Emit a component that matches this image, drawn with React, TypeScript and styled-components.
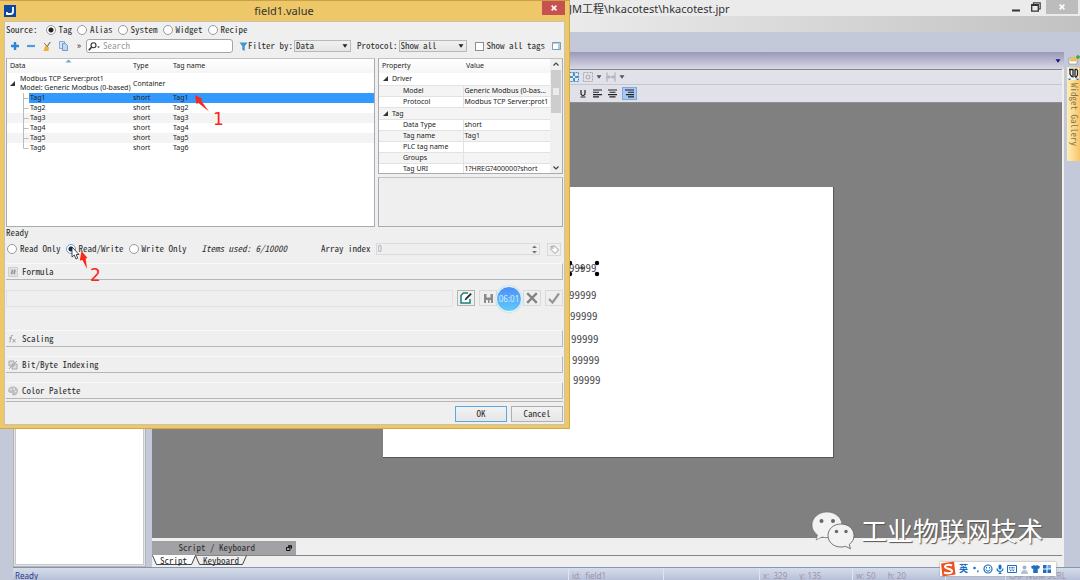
import React from 'react';
import styled, { createGlobalStyle, css } from 'styled-components';

const mono = `"Noto Sans Mono CJK SC", "Liberation Mono", monospace`;
const ui = `"Noto Sans", "DejaVu Sans Condensed", sans-serif`;
const title = `"Noto Sans", "Noto Sans CJK SC", sans-serif`;

const GlobalStyle = createGlobalStyle`
  * { box-sizing: border-box; }
  body { margin: 0; background: #c3c9d9; }
  button, input, select { font: inherit; color: inherit; margin: 0; padding: 0; border: 0; background: none; border-radius: 0; outline: 0; }
  svg { display: block; flex: none; }
`;

/* ---------- main window ---------- */

const Desktop = styled.div`
  position: relative;
  display: flex;
  flex-direction: column;
  min-height: 100vh;
  overflow: hidden;
  font: 9px/12px ${mono};
  color: #2c2c2c;
`;

const TitleBar = styled.header`
  display: flex;
  justify-content: flex-end;
  height: 16px;
  background: #ebebeb;
`;

const WindowTitle = styled.h1`
  flex: 1;
  margin: 0;
  padding-left: 569px;
  font: 11px/17px ${title};
  color: #333;
  white-space: nowrap;
`;

const WindowButton = styled.button<{ $close?: boolean }>`
  display: flex;
  align-items: center;
  justify-content: center;
  width: ${p => (p.$close ? 32 : 20)}px;
  height: 14px;
  margin-right: ${p => (p.$close ? 2 : 0)}px;
  background: ${p => (p.$close ? '#bcbcbc' : 'transparent')};
`;

const Ribbon = styled.div`
  height: 16px;
  background: linear-gradient(90deg, #ededed 50%, #c2c2c2);
`;

const Workspace = styled.div`
  flex: 1;
  display: flex;
  padding-top: 20px;
`;

const SidePanel = styled.aside`
  width: 133px;
  margin: 0 6px 0 13px;
  border: 1px solid #b4b4b8;
  padding: 1px;
  background: #e4e4e4;
`;

const SideBody = styled.div`
  height: 100%;
  background: #fff;
  border: 1px solid #c8c8c8;
  border-top: 0;
`;

const Editor = styled.main`
  flex: 1;
  min-width: 0;
  display: flex;
  flex-direction: column;
  background: #efefef;
`;

const EditorHead = styled.div`
  display: flex;
  justify-content: flex-end;
  align-items: center;
  height: 17px;
  padding-right: 3px;
  background: linear-gradient(#9a98b9, #d9d8e5);
`;

const Toolbar = styled.div<{ $text?: boolean }>`
  display: flex;
  align-items: center;
  gap: ${p => (p.$text ? 4 : 3)}px;
  height: ${p => (p.$text ? 18 : 15)}px;
  padding-left: ${p => (p.$text ? 425 : 416)}px;
  background: #e1e1ea;
  border-top: 1px solid ${p => (p.$text ? '#c6c6cf' : '#85858d')};
  margin-right: 2px;
`;

const ToolButton = styled.button<{ $on?: boolean }>`
  display: flex;
  align-items: center;
  justify-content: center;
  width: ${p => (p.$on ? 15 : 11)}px;
  height: 13px;
  ${p => p.$on && css`background: #a6c8f2; border: 1px solid #7dabe0;`}
`;

const Canvas = styled.div`
  flex: 1;
  display: flex;
  align-items: center;
  justify-content: center;
  background: #808080;
  margin-right: 2px;
  padding: 4px 0 0 3px;
  border-top: 1px solid #8f8f96;
`;

const Sheet = styled.div`
  position: relative;
  width: 451px;
  height: 271px;
  background: #fff;
  border-right: 1px solid #555;
  border-bottom: 1px solid #555;
`;

const Field = styled.span<{ $x: number; $y: number }>`
  position: absolute;
  left: ${p => p.$x}px;
  top: ${p => p.$y}px;
  font: 11px/12px ${mono};
  color: #4a4a4e;
`;

const Handles = styled.svg`
  position: absolute;
  left: 180px;
  top: 72px;
`;

const ScriptArea = styled.footer`
  display: flex;
  flex-direction: column;
  padding-top: 3px;
  height: 29px;
`;

const ScriptTitle = styled.div`
  display: flex;
  align-items: center;
  justify-content: flex-end;
  gap: 31px;
  width: 144px;
  height: 14px;
  padding-right: 4px;
  background: #a2a1a5;
`;

const Tabs = styled.nav`
  display: flex;
  height: 11px;
  border-top: 1px solid #858585;
  margin-right: 2px;
`;

const Tab = styled.button<{ $on?: boolean }>`
  position: relative;
  width: ${p => (p.$on ? 43 : 52)}px;
  height: 9px;
  line-height: 8px;
  text-align: center;
  > svg { position: absolute; left: 0; top: -1px; }
  > span { position: relative; }
`;

const Rail = styled.aside`
  width: 16px;
  display: flex;
  flex-direction: column;
  align-items: flex-end;
  gap: 2px;
  padding-top: 3px;
`;

const RailTab = styled.button`
  display: flex;
  flex-direction: column;
  align-items: center;
  gap: 3px;
  width: 13px;
  height: 94px;
  padding-top: 1px;
  background: linear-gradient(90deg, #fdf0b6, #fac468);
  color: #85754f;
  > span { writing-mode: vertical-rl; line-height: 12px; }
`;

const StatusBar = styled.footer`
  display: flex;
  height: 13px;
  margin-left: 13px;
  border-top: 1px solid #8796b0;
  background: linear-gradient(#d6deea, #b7c0d8);
  font: 8px/15px ${title};
  color: #a094a8;
`;

const StatusCell = styled.span<{ $w?: number; $main?: boolean }>`
  ${p => (p.$main ? css`flex: 1; padding-left: 2px; color: #2c3a8c;` : css`width: ${p.$w}px; padding-left: 3px; border-left: 1px solid #dfe5f0;`)}
  display: flex;
  gap: 12px;
  white-space: pre;
`;

/* ---------- dialog ---------- */

const Dialog = styled.section`
  position: absolute;
  left: 0;
  top: 0;
  width: 570px;
  padding: 0 4px 3px;
  background: #eec768;
  border-top: 1px solid #c9a048;
  border-right: 1px solid #d3ab52;
  border-bottom: 1px solid #cfa850;
`;

const DialogHead = styled.header`
  display: flex;
  align-items: center;
  height: 20px;
  > h2 {
    flex: 1;
    margin: 0;
    padding-left: 10px;
    text-align: center;
    font: 11px/20px ${title};
    color: #333;
  }
`;

const CloseButton = styled.button`
  display: flex;
  align-items: center;
  justify-content: center;
  align-self: flex-start;
  width: 23px;
  height: 14px;
  background: #c75050;
`;

const Client = styled.div`
  display: flex;
  flex-direction: column;
  background: #efefef;
  border: 1px solid #c9c2b0;
  padding: 1px 1px 2px;
`;

const Row = styled.div<{ $h: number; $mb?: number; $gap?: number }>`
  display: flex;
  align-items: center;
  flex: none;
  gap: ${p => p.$gap ?? 0}px;
  height: ${p => p.$h}px;
  margin-bottom: ${p => p.$mb ?? 0}px;
  white-space: nowrap;
`;

const AccessRow = styled(Row)`
  padding: 0 2px 0 1px;
`;

const RadioLabel = styled.label`
  display: flex;
  align-items: center;
  gap: 3px;
  margin-right: 5px;
`;

const Radio = styled.input<{ $focus?: boolean }>`
  appearance: none;
  width: 10px;
  height: 10px;
  border: 1px solid ${p => (p.$focus ? '#5aa5e8' : '#9a9a9a')};
  border-radius: 50%;
  background: #fff;
  &:checked { background: radial-gradient(circle, #222 0 2px, #fff 3px); }
`;

const Caption = styled.span<{ $ml?: number; $mr?: number; $italic?: boolean }>`
  margin: 0 ${p => p.$mr ?? 0}px 0 ${p => p.$ml ?? 0}px;
  font-style: ${p => (p.$italic ? 'italic' : 'normal')};
`;

const IconButton = styled.button<{ $framed?: boolean; $strong?: boolean; $w?: number }>`
  display: flex;
  align-items: center;
  justify-content: center;
  flex: none;
  width: ${p => p.$w ?? 17}px;
  height: ${p => (p.$framed ? (p.$w === 14 ? 13 : 16) : 12)}px;
  ${p => p.$framed && css`border: 1px solid ${p.$strong ? '#b4b4b4' : '#d9d9d9'};`}
`;

const SearchBox = styled.label`
  display: flex;
  align-items: center;
  gap: 3px;
  width: 147px;
  height: 14px;
  padding-left: 1px;
  margin-right: 6px;
  background: #fff;
  border: 1px solid #a5a5a5;
  border-radius: 3px;
  > input { width: 100%; height: 12px; }
  > input::placeholder { color: #999; opacity: 1; }
`;

const SelectBox = styled.span<{ $w: number; $mr: number }>`
  position: relative;
  width: ${p => p.$w}px;
  height: 12px;
  margin-right: ${p => p.$mr}px;
  > select {
    appearance: none;
    display: block;
    width: 100%;
    height: 12px;
    padding: 0 0 0 1px;
    line-height: 10px;
    border: 1px solid #b8b8b8;
    background: linear-gradient(#f1f1f1, #e5e5e5);
  }
  > svg { position: absolute; right: 3px; top: 4px; pointer-events: none; }
`;

const CheckLabel = styled.label`
  display: flex;
  align-items: center;
  gap: 3px;
  flex: 1;
  > input {
    appearance: none;
    width: 9px;
    height: 9px;
    background: #fff;
    border: 1px solid #8f8f8f;
  }
`;

const Panels = styled.div`
  display: flex;
  gap: 3px;
  height: 169px;
`;

const Box = styled.div<{ $white?: boolean }>`
  overflow: hidden;
  background: ${p => (p.$white ? '#fff' : '#efefef')};
  border: 1px solid #a9abb0;
  border-top-color: #c0c2c6;
`;

const TreeBox = styled(Box)`
  position: relative;
  flex: 1;
`;

const RightStack = styled.div`
  display: flex;
  flex-direction: column;
  gap: 3px;
  width: 185px;
`;

const PropBox = styled(Box)`
  display: flex;
  height: 116px;
`;

const DetailBox = styled(Box)`
  flex: 1;
`;

const Table = styled.table`
  width: 100%;
  table-layout: fixed;
  border-collapse: collapse;
  font: 7px/9px ${ui};
  color: #222;
  th, td { padding: 0 0 0 3px; text-align: left; font-weight: normal; white-space: nowrap; }
  thead th { height: 14px; line-height: 14px; background: linear-gradient(#fff, #f5f5f5); }
`;

const SortMark = styled.svg`
  position: absolute;
  left: 58px;
  top: 0;
`;

const GroupRow = styled.tr`
  height: 20px;
  > td:first-child > div { display: flex; align-items: center; gap: 5px; }
`;

const TagRow = styled.tr<{ $selected?: boolean; $alt?: boolean }>`
  height: 10px;
  line-height: 10px;
  background: ${p => (p.$selected ? '#3399ff' : p.$alt ? '#f4f4f4' : '#fff')};
  > td:first-child { padding: 0; }
  > td:first-child > div { display: flex; }
`;

const Branch = styled.span<{ $selected?: boolean }>`
  width: 22px;
  height: 10px;
  margin-right: 1px;
  background: ${p => (p.$selected ? '#fff' : 'transparent')};
`;

const PropRow = styled.tr<{ $group?: boolean; $alt?: boolean }>`
  height: ${p => (p.$group ? 12 : 11)}px;
  background: ${p => (p.$alt ? '#f4f4f4' : '#fff')};
  > td { border-bottom: 1px solid #e2e2e2; }
  > td:first-child { padding-left: ${p => (p.$group ? 4 : 24)}px; }
  > td + td { border-left: 1px solid #e2e2e2; padding-left: 1px; }
  > td > div { display: flex; align-items: center; gap: 4px; }
`;

const ScrollBar = styled.div`
  display: flex;
  flex-direction: column;
  align-items: center;
  flex: none;
  width: 12px;
  background: #f0f0f0;
  padding: 3px 0;
`;

const Thumb = styled.div`
  display: flex;
  align-items: center;
  justify-content: center;
  width: 10px;
  height: 43px;
  margin: 4px 0 auto;
  background: #cdcdcd;
  > i { width: 6px; height: 7px; background: #ececec; }
`;

const Spin = styled.label`
  display: flex;
  align-items: center;
  flex: 1;
  height: 12px;
  margin: 0 7px 0 5px;
  padding: 0 2px 0 1px;
  border: 1px solid #dadada;
  color: #aaa;
  > input { flex: 1; min-width: 0; height: 10px; }
`;

const Fold = styled.button<{ $mb: number }>`
  display: flex;
  align-items: center;
  gap: 4px;
  height: 17px;
  flex: none;
  margin-bottom: ${p => p.$mb}px;
  padding-left: 2px;
  border-top: 1px solid #f9f9f9;
  border-right: 1px solid #b6b6b6;
  border-bottom: 1px solid #b6b6b6;
  text-align: left;
`;

const FormulaInput = styled.input`
  flex: 1;
  min-width: 0;
  height: 17px;
  border: 1px solid #e2e2e2;
`;

const PushButton = styled.button<{ $default?: boolean }>`
  width: 52px;
  height: 16px;
  margin-left: 4px;
  background: linear-gradient(#f2f2f2, #e6e6e6);
  border: 1px solid ${p => (p.$default ? '#5aa9e2' : '#b0b0b0')};
`;

const Footer = styled.div`
  display: flex;
  justify-content: flex-end;
  padding: 4px 0 0;
  border-top: 1px solid #b6b6b6;
`;

/* ---------- overlays ---------- */

const Overlay = styled.svg<{ $x: number; $y: number }>`
  position: absolute;
  left: ${p => p.$x}px;
  top: ${p => p.$y}px;
  pointer-events: none;
`;

const Note = styled.span<{ $x: number; $y: number }>`
  position: absolute;
  left: ${p => p.$x}px;
  top: ${p => p.$y}px;
  font: 17px/18px "DejaVu Sans", sans-serif;
  color: #f8281a;
`;

const Timer = styled.span`
  position: absolute;
  left: 496px;
  top: 286px;
  width: 26px;
  height: 26px;
  border: 1px solid #e4f5ff;
  border-radius: 50%;
  background: linear-gradient(#4a90f8, #62cbfa);
  box-shadow: 0 0 2px #9cc;
  color: #d8ecff;
  font: 8px/24px ${title};
  text-align: center;
`;

const Watermark = styled.div`
  position: absolute;
  right: 37px;
  bottom: 30px;
  display: flex;
  align-items: center;
  gap: 6px;
  font: 26px/36px "Noto Sans CJK SC", sans-serif;
  color: #fff;
  text-shadow: 1px 1px 1px #555;
`;

const ImeBar = styled.div`
  position: absolute;
  right: 24px;
  bottom: 4px;
  display: flex;
  align-items: center;
  gap: 3px;
  height: 14px;
  width: 116px;
  padding-right: 2px;
  background: #fff;
  box-shadow: 0 0 2px #999;
  color: #1e6fc4;
  font: bold 9px/12px "Noto Sans CJK SC", sans-serif;
`;

const tags = ['Tag1', 'Tag2', 'Tag3', 'Tag4', 'Tag5', 'Tag6'];

const props: { name: string; value?: string; group?: boolean }[] = [
  { name: 'Driver', group: true },
  { name: 'Model', value: 'Generic Modbus (0-bas...' },
  { name: 'Protocol', value: 'Modbus TCP Server:prot1' },
  { name: 'Tag', group: true },
  { name: 'Data Type', value: 'short' },
  { name: 'Tag name', value: 'Tag1' },
  { name: 'PLC tag name', value: '' },
  { name: 'Groups', value: '' },
  { name: 'Tag URI', value: '1?HREG?400000?short' },
];

const fields = [
  { x: 186, y: 74 },
  { x: 186, y: 101 },
  { x: 187, y: 122 },
  { x: 188, y: 145 },
  { x: 189, y: 166 },
  { x: 190, y: 186 },
];

const Down = ({ color = '#222' }: { color?: string }) => (
  <svg width="6" height="4" viewBox="0 0 6 4"><path d="M0.5 0.3h5L3 3.7z" fill={color} /></svg>
);

const Expanded = () => (
  <svg width="5" height="5" viewBox="0 0 5 5"><path d="M5 0v5H0z" fill="#333" /></svg>
);

const Cross = ({ size = 6, color = '#fff', w = 1.5 }: { size?: number; color?: string; w?: number }) => (
  <svg width={size} height={size} viewBox="0 0 6 6"><path d="M.6.6l4.8 4.8M5.4.6L.6 5.4" stroke={color} strokeWidth={w} /></svg>
);

const Align = ({ rows }: { rows: string }) => (
  <svg width="9" height="9" viewBox="0 0 9 9"><path d={rows} stroke="#222" strokeWidth="1.1" /></svg>
);

const MainWindow = () => (
  <>
    <TitleBar>
      <WindowTitle>JM工程\hkacotest\hkacotest.jpr</WindowTitle>
      <WindowButton aria-label="Minimize"><svg width="8" height="10"><path d="M0 8.500h8" stroke="#333" strokeWidth="2" /></svg></WindowButton>
      <WindowButton aria-label="Restore">
        <svg width="10" height="10" viewBox="0 0 10 10"><path d="M2.500 2V.8h6.700v6H8" fill="none" stroke="#444" strokeWidth="1.200" /><path d="M.7 2.700h6.600v6.500H.7z" fill="none" stroke="#333" strokeWidth="1.300" /><path d="M.7 3.200h6.600" stroke="#333" strokeWidth="1.600" /></svg>
      </WindowButton>
      <WindowButton $close aria-label="Close"><Cross /></WindowButton>
    </TitleBar>
    <Ribbon />
    <Workspace>
      <SidePanel><SideBody /></SidePanel>
      <Editor>
        <EditorHead><Down color="#14147c" /></EditorHead>
        <Toolbar>
          <ToolButton aria-label="Snap to grid">
            <svg width="10" height="10" viewBox="0 0 10 10"><path d="M.5.5h9v9h-9z" fill="#dcebf8" stroke="#3b87c4" strokeDasharray="2 1" /><path d="M5 1v3M5 6v3M1 5h3M6 5h3" stroke="#1f6fb4" strokeWidth="1.500" /></svg>
          </ToolButton>
          <ToolButton aria-label="Size">
            <svg width="10" height="10" viewBox="0 0 10 10"><path d="M.5.5h9v9h-9z" fill="none" stroke="#aaa" strokeDasharray="2 1" /><circle cx="5" cy="5" r="2" fill="none" stroke="#aaa" /></svg>
          </ToolButton>
          <Down color="#555" />
          <ToolButton aria-label="Spacing">
            <svg width="10" height="10" viewBox="0 0 10 10"><path d="M1 .5v9M9 .5v9M1 5h8M3 3.500v3M7 3.500v3" stroke="#a5a5a8" /></svg>
          </ToolButton>
          <Down color="#555" />
        </Toolbar>
        <Toolbar $text>
          <ToolButton aria-label="Underline">
            <svg width="6" height="9" viewBox="0 0 6 9"><path d="M1 1v3.500a2 2 0 0 0 4 0V1M.5 8h5" fill="none" stroke="#222" strokeWidth="1.200" /></svg>
          </ToolButton>
          <ToolButton aria-label="Align left"><Align rows="M0 1h9M0 3.300h6M0 5.600h9M0 7.900h6" /></ToolButton>
          <ToolButton aria-label="Align center"><Align rows="M0 1h9M1.500 3.300h6M0 5.600h9M1.500 7.900h6" /></ToolButton>
          <ToolButton $on aria-label="Align right"><Align rows="M0 1h9M3 3.300h6M1 5.600h8M3 7.900h6" /></ToolButton>
        </Toolbar>
        <Canvas>
          <Sheet>
            {fields.map((f, i) => <Field key={i} $x={f.x} $y={f.y}>99999</Field>)}
            <Handles width="40" height="18" viewBox="0 0 40 18">
              <circle cx="7" cy="4" r="2.200" /><circle cx="7" cy="15" r="2.200" />
              <circle cx="34" cy="4" r="2.200" /><circle cx="34" cy="15" r="2.200" />
              <path d="M16 9h6M19 6.500v5" stroke="#222" />
            </Handles>
          </Sheet>
        </Canvas>
        <ScriptArea>
          <ScriptTitle>
            <span>Script / Keyboard</span>
            <svg width="6" height="6" viewBox="0 0 6 6"><path d="M2 1h3.500v2.500" fill="none" stroke="#111" strokeWidth="1.500" /><path d="M.5 2.500h3.500v3H.5z" fill="#a2a1a5" stroke="#111" /></svg>
          </ScriptTitle>
          <Tabs>
            <Tab $on>
              <svg width="44" height="11" viewBox="0 0 44 11"><path d="M.5 0l4 9.500h35L43.500 0z" fill="#fff" /><path d="M.5.5l4 9h35l4-9" fill="none" stroke="#444" /></svg>
              <span>Script</span>
            </Tab>
            <Tab>
              <svg width="52" height="11" viewBox="0 0 52 11"><path d="M.5.5l4 9h43l4-9" fill="none" stroke="#444" /></svg>
              <span>Keyboard</span>
            </Tab>
          </Tabs>
        </ScriptArea>
      </Editor>
      <Rail>
        <svg width="12" height="10" viewBox="0 0 12 10"><path d="M1 3h8v6H1z" fill="#fff" stroke="#888" strokeWidth=".6" /><path d="M1 5l3-3 5-.5 2 2-3 3H3z" fill="#e9bf6e" /><path d="M8 2h4M10 0v4" stroke="#35a83a" strokeWidth="1.500" /></svg>
        <RailTab>
          <svg width="11" height="12" viewBox="0 0 11 12"><path d="M0 0h11v12H0z" fill="#f4f2ea" /><path d="M2 1v5l2 3M1 1.500h4v8M9.500 2v5l-2 3M6.500 1.500h3M7 2v7" fill="none" stroke="#222" strokeWidth="1.300" /><path d="M.5 11.300h2M8.500 11.300h2" stroke="#2c6fc0" strokeWidth="1.500" /></svg>
          <span>Widget Gallery</span>
        </RailTab>
      </Rail>
    </Workspace>
    <StatusBar>
      <StatusCell $main>Ready</StatusCell>
      <StatusCell $w={95}>{'id:  field1'}</StatusCell>
      <StatusCell $w={96} />
      <StatusCell $w={93}><span>{'x:  329'}</span><span>y: 135</span></StatusCell>
      <StatusCell $w={93}><span>w: 50</span><span>h: 20</span></StatusCell>
      <StatusCell $w={60} />
      <StatusCell $w={75}>CAP NUM SCRL</StatusCell>
    </StatusBar>
  </>
);

const ValueDialog = () => (
  <Dialog role="dialog" aria-label="field1.value">
    <DialogHead>
      <svg width="12" height="12" viewBox="0 0 12 12"><path d="M0 0h12v12H0z" fill="#0d47a1" /><path d="M9 2v4.500Q9 9 6.500 9H3V7" fill="none" stroke="#fff" strokeWidth="1.800" /></svg>
      <h2>field1.value</h2>
      <CloseButton aria-label="Close"><Cross /></CloseButton>
    </DialogHead>
    <Client>
      <Row $h={14} $mb={2}>
        <Caption $mr={8}>Source:</Caption>
        {['Tag', 'Alias', 'System', 'Widget', 'Recipe'].map((s, i) => (
          <RadioLabel key={s}><Radio type="radio" name="source" defaultChecked={i === 0} />{s}</RadioLabel>
        ))}
      </Row>
      <Row $h={14} $mb={5}>
        <IconButton aria-label="Add"><svg width="8" height="8" viewBox="0 0 8 8"><path d="M4 0v8M0 4h8" stroke="#2f86d8" strokeWidth="2.400" /></svg></IconButton>
        <IconButton $w={15} aria-label="Remove"><svg width="8" height="8" viewBox="0 0 8 8"><path d="M0 4h8" stroke="#4c9ce0" strokeWidth="2.200" /></svg></IconButton>
        <IconButton aria-label="Clean"><svg width="8" height="9" viewBox="0 0 8 9"><path d="M7.300 0L4.500 4" stroke="#777" strokeWidth="1.200" /><path d="M2.500 3l3.500 2.500L5.500 9H.5z" fill="#eeb23c" /><path d="M1 1l4 4" stroke="#8d7b62" /></svg></IconButton>
        <IconButton aria-label="Copy"><svg width="9" height="10" viewBox="0 0 9 10"><path d="M.5.5h5v7h-5z" fill="#d7e5f7" stroke="#86a9d8" /><path d="M3.500 2.500h3l2 2v5h-5z" fill="#c0d6f2" stroke="#7099d0" /></svg></IconButton>
        <IconButton $w={14} aria-label="More">»</IconButton>
        <SearchBox>
          <svg width="12" height="9" viewBox="0 0 12 9"><circle cx="5.500" cy="3.300" r="2.500" fill="none" stroke="#333" strokeWidth="1.100" /><path d="M3.500 5.200L.8 8.300" stroke="#333" strokeWidth="1.600" /><path d="M9 4.500h3l-1.500 1.500z" fill="#333" /></svg>
          <input placeholder="Search" aria-label="Search" />
        </SearchBox>
        <svg width="9" height="9" viewBox="0 0 9 9"><path d="M.5.5h8L5.700 4.200V9L3.300 7.700V4.200z" fill="#3d97cd" /></svg>
        <Caption $mr={1}>Filter by:</Caption>
        <SelectBox $w={57} $mr={6}><select aria-label="Filter by"><option>Data</option></select><Down /></SelectBox>
        <Caption $mr={1}>Protocol:</Caption>
        <SelectBox $w={68} $mr={8}><select aria-label="Protocol"><option>Show all</option></select><Down /></SelectBox>
        <CheckLabel><input type="checkbox" />Show all tags</CheckLabel>
        <IconButton $w={13} aria-label="Columns"><svg width="9" height="8" viewBox="0 0 9 8"><path d="M.5.5h8v7h-8z" fill="#fff" stroke="#7e9db0" /><path d="M.5 1h8" stroke="#7e9db0" /><path d="M6 2h2v5H6z" fill="#a9cfe4" /></svg></IconButton>
      </Row>
      <Panels>
        <TreeBox $white>
          <SortMark width="7" height="4" viewBox="0 0 7 4"><path d="M.5 3.500L3.500.5l3 3z" fill="#6fa8c8" /></SortMark>
          <Table>
            <colgroup><col width="123" /><col width="40" /><col /></colgroup>
            <thead><tr><th>Data</th><th>Type</th><th>Tag name</th></tr></thead>
            <tbody>
              <GroupRow>
                <td><div><Expanded /><span>Modbus TCP Server:prot1<br />Model: Generic Modbus (0-based)</span></div></td>
                <td colSpan={2}>Container</td>
              </GroupRow>
              {tags.map((t, i) => (
                <TagRow key={t} $selected={i === 0} $alt={i % 2 === 0}>
                  <td><div>
                    <Branch $selected={i === 0}>
                      <svg width="22" height="10"><path d={i === tags.length - 1 ? 'M16.500 0v5.500h5' : 'M16.500 0v10M16.500 5.500h5'} fill="none" stroke="#bbb" /></svg>
                    </Branch>
                    {t}
                  </div></td>
                  <td>short</td>
                  <td>{t}</td>
                </TagRow>
              ))}
            </tbody>
          </Table>
        </TreeBox>
        <RightStack>
          <PropBox $white>
            <Table>
              <colgroup><col width="84" /><col /></colgroup>
              <thead><tr><th>Property</th><th>Value</th></tr></thead>
              <tbody>
                {props.map((p, i) => (
                  <PropRow key={p.name} $group={p.group} $alt={i % 2 === 1}>
                    {p.group
                      ? <td colSpan={2}><div><Expanded />{p.name}</div></td>
                      : <><td>{p.name}</td><td>{p.value}</td></>}
                  </PropRow>
                ))}
              </tbody>
            </Table>
            <ScrollBar>
              <svg width="6" height="4" viewBox="0 0 6 4"><path d="M.5 3.500L3 1l2.500 2.500" fill="none" stroke="#444" strokeWidth="1.200" /></svg>
              <Thumb><i /></Thumb>
              <svg width="6" height="4" viewBox="0 0 6 4"><path d="M.5.5L3 3 5.500.5" fill="none" stroke="#444" strokeWidth="1.200" /></svg>
            </ScrollBar>
          </PropBox>
          <DetailBox />
        </RightStack>
      </Panels>
      <Row $h={12} $mb={2}>Ready</Row>
      <AccessRow $h={16} $mb={6}>
        {['Read Only', 'Read/Write', 'Write Only'].map((s, i) => (
          <RadioLabel key={s}><Radio type="radio" name="access" defaultChecked={i === 1} $focus={i === 1} />{s}</RadioLabel>
        ))}
        <Caption $ml={10} $mr={34} $italic>Items used: 6/10000</Caption>
        <Caption>Array index</Caption>
        <Spin>
          <input defaultValue="0" aria-label="Array index" />
          <svg width="5" height="9" viewBox="0 0 5 9"><path d="M0 3h5L2.500.5zM0 6h5L2.500 8.500z" fill="#777" /></svg>
        </Spin>
        <IconButton $framed $w={14} aria-label="Pick tag"><svg width="9" height="9" viewBox="0 0 9 9"><path d="M1 1.500l3.500-.5 4 4L5 8.500l-4-4z" fill="#fff" stroke="#999" /><circle cx="3" cy="3" r=".8" fill="#888" /></svg></IconButton>
      </AccessRow>
      <Fold $mb={9}>
        <svg width="10" height="10" viewBox="0 0 10 10"><path d="M.5.5h9v9h-9z" fill="#e2e2e2" stroke="#cfcfcf" /><path d="M3.500 7.500l1-5M6 7.500l1-5M3 4h5M2.500 6h5" stroke="#888" strokeWidth=".8" /></svg>
        Formula
      </Fold>
      <Row $h={18} $mb={23} $gap={4}>
        <FormulaInput aria-label="Formula" />
        <IconButton $framed $strong $w={18} aria-label="Edit"><svg width="12" height="12" viewBox="0 0 12 12"><path d="M8 1H3.500L1 3.500V11h9V7" fill="#fff" stroke="#1a8078" strokeWidth="1.500" /><path d="M4.500 8.500l1-2.500 5-5 1.300 1.300-5 5z" fill="#1b3236" /></svg></IconButton>
        <IconButton $framed $w={18} aria-label="Save"><svg width="9" height="9" viewBox="0 0 9 9"><path d="M0 0h9v9H0z" fill="#8a8a8a" /><path d="M2.500 0h4v3.500h-4zM2 6h2v3H2zM5.500 6H7v3H5.500z" fill="#eee" /></svg></IconButton>
        <IconButton $framed $w={18} aria-label="Open" />
        <IconButton $framed $w={18} aria-label="Clear"><Cross size={12} color="#858585" w={1.2} /></IconButton>
        <IconButton $framed $w={18} aria-label="Apply"><svg width="12" height="12" viewBox="0 0 12 12"><path d="M1 7l3.500 3.500L11 1.500" fill="none" stroke="#969696" strokeWidth="2.200" /></svg></IconButton>
      </Row>
      <Fold $mb={9}>
        <svg width="10" height="10" viewBox="0 0 10 10"><path d="M5 1.500Q3.500.8 3 3L1.800 8.500M1 4h3M4.500 5l3 3.500M7.500 5l-3 3.500" fill="none" stroke="#999" strokeWidth=".9" /></svg>
        Scaling
      </Fold>
      <Fold $mb={9}>
        <svg width="10" height="10" viewBox="0 0 10 10"><path d="M1 1h5v5H1zM4 4h5v5H4zM1 9l8-8" fill="#ddd" stroke="#aaa" /></svg>
        Bit/Byte Indexing
      </Fold>
      <Fold $mb={2}>
        <svg width="10" height="10" viewBox="0 0 10 10"><path d="M5 .5c3 0 5 2 5 4.500S8 9.500 5.500 9.500 5 7 3.500 7 0 6.500 0 4.500 2 .5 5 .5z" fill="#bdbdbd" /><circle cx="3" cy="3.500" r="1" fill="#e8e8e8" /><circle cx="6" cy="3" r="1" fill="#e8e8e8" /><circle cx="7.500" cy="5.500" r="1" fill="#e8e8e8" /></svg>
        Color Palette
      </Fold>
      <Footer>
        <PushButton $default>OK</PushButton>
        <PushButton>Cancel</PushButton>
      </Footer>
    </Client>
  </Dialog>
);

export default function App() {
  return (
    <Desktop>
      <GlobalStyle />
      <MainWindow />
      <ValueDialog />
      <Timer>06:01</Timer>
      <Overlay $x={194} $y={95} width="16" height="18" viewBox="0 0 16 18"><path d="M1 0l7.500 4-1.500 1.500L15 16.500 4.500 8 2.500 9z" fill="#f8281a" /></Overlay>
      <Note $x={213} $y={110}>1</Note>
      <Overlay $x={71} $y={246} width="9" height="14" viewBox="0 0 9 14"><path d="M1 1v10l2.300-2L5 13l1.700-.8L5.200 8.500H8z" fill="#fff" stroke="#333" strokeWidth=".9" /></Overlay>
      <Overlay $x={79} $y={251} width="10" height="19" viewBox="0 0 10 19"><path d="M2.500 0L8.500 7l-1.800.5L8 18 3.500 9 .8 9.500z" fill="#f8281a" /></Overlay>
      <Note $x={90} $y={266}>2</Note>
      <Watermark>
        <svg width="44" height="40" viewBox="0 0 44 40">
          <path d="M16 2C7.500 2 1 8 1 15c0 4 2 7.500 5.500 10L5 30l6-3c1.700.5 3.200.7 5 .7 8.500 0 15-5.700 15-12.700S24.500 2 16 2z" fill="#f2f2f2" stroke="#666" strokeWidth=".6" />
          <circle cx="10.500" cy="11" r="2" fill="#666" /><circle cx="22" cy="11" r="2" fill="#666" />
          <path d="M30 14c-7.500 0-13 5-13 11.500S22.500 37 30 37c1.500 0 3-.2 4.500-.7l5 2.500-1.300-4.300C41.500 32 43 29 43 25.500 43 19 37.500 14 30 14z" fill="#f2f2f2" stroke="#666" strokeWidth=".9" />
          <circle cx="25.500" cy="21.500" r="1.700" fill="#666" /><circle cx="35" cy="21.500" r="1.700" fill="#666" />
        </svg>
        工业物联网技术
      </Watermark>
      <ImeBar>
        <svg width="16" height="16" viewBox="0 0 16 16"><path d="M1 2.500L14 .5l1.500 13L2.500 15.500z" fill="#ee5220" /><path d="M12 4.500C9 3 4.500 4 5 6s6.500 1.500 7 4-4.500 3-8 1.500" fill="none" stroke="#fff" strokeWidth="2" /></svg>
        <span>英</span>
        <svg width="9" height="9" viewBox="0 0 9 9"><circle cx="3.500" cy="3" r="1.300" fill="#1e6fc4" /><path d="M6 5.500h2L6.500 8" fill="#1e6fc4" /></svg>
        <svg width="10" height="10" viewBox="0 0 10 10"><circle cx="5" cy="5" r="4" fill="none" stroke="#1e6fc4" strokeWidth="1.200" /><path d="M2.800 5.500a2.300 2.300 0 0 0 4.400 0M3.500 3v1.500M6.500 3v1.500" fill="none" stroke="#1e6fc4" /></svg>
        <svg width="8" height="10" viewBox="0 0 8 10"><rect x="2.500" y=".5" width="3" height="5" rx="1.500" fill="#1e6fc4" /><path d="M1 4.500a3 3 0 0 0 6 0M4 7.500V9.500M2.500 9.500h3" fill="none" stroke="#1e6fc4" strokeWidth="1.200" /></svg>
        <svg width="10" height="8" viewBox="0 0 10 8"><path d="M.5.5h9v7h-9z" fill="#fff" stroke="#1e6fc4" /><path d="M2 2.500h6M2 4h6M3 5.700h4" stroke="#1e6fc4" strokeDasharray="1 .5" /></svg>
        <svg width="8" height="9" viewBox="0 0 8 9"><circle cx="4.500" cy="2.500" r="2" fill="#9fb2cc" /><path d="M1 9c0-3 1.500-4 3.500-4S8 6 8 9z" fill="#b4c2d6" /></svg>
        <svg width="9" height="8" viewBox="0 0 9 8"><path d="M0 1.500L3 0q1.500 1.500 3 0l3 1.500L8 4l-1.200-.5V8H2.200V3.500L1 4z" fill="#1e6fc4" /></svg>
        <svg width="8" height="8" viewBox="0 0 8 8"><path d="M0 0h3.500v3.500H0zM0 4.500h3.500V8H0zM4.500 4.500H8V8H4.500z" fill="#1e6fc4" /><path d="M4.500 0H8v3.500H4.500z" fill="#6aa3dd" /></svg>
      </ImeBar>
    </Desktop>
  );
}
